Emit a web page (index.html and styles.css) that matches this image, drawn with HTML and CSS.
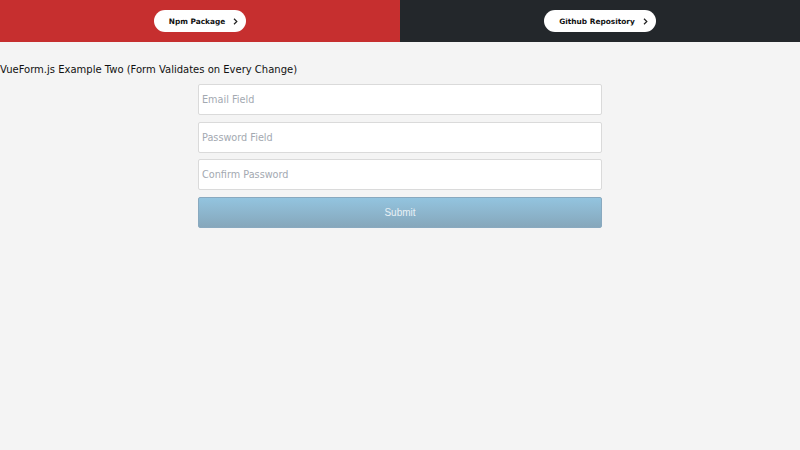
FILE: index.html
```html
<!DOCTYPE html>
<html>
<head>
<meta charset="utf-8">
<link rel="stylesheet" href="styles.css">
</head>
<body>
<header class="topbar">
  <div class="half half-red">
    <a class="pill" href="#">Npm Package<svg class="chev" width="5" height="7" viewBox="0 0 5 7"><path d="M1 0.8 L3.8 3.5 L1 6.2" fill="none" stroke="#222" stroke-width="1.2"/></svg></a>
  </div>
  <div class="half half-dark">
    <a class="pill" href="#">Github Repository<svg class="chev" width="5" height="7" viewBox="0 0 5 7"><path d="M1 0.8 L3.8 3.5 L1 6.2" fill="none" stroke="#222" stroke-width="1.2"/></svg></a>
  </div>
</header>
<main class="content">
  <h1 class="title">VueForm.js Example Two (Form Validates on Every Change)</h1>
  <form class="form">
    <input class="field" type="email" placeholder="Email Field">
    <input class="field" type="password" placeholder="Password Field">
    <input class="field" type="password" placeholder="Confirm Password">
    <button class="submit" type="button">Submit</button>
  </form>
</main>
</body>
</html>
```
FILE: styles.css
```css
* { box-sizing: border-box; }
html, body { margin: 0; padding: 0; }
body {
  background: #f4f4f4;
  font-family: "DejaVu Sans", sans-serif;
  width: 800px;
  height: 450px;
  overflow: hidden;
}
.topbar {
  display: flex;
  height: 42px;
}
.half {
  flex: 1;
  display: flex;
  align-items: center;
  justify-content: center;
}
.half-red { background: #c62f2f; }
.half-dark { background: #23272b; }
.pill {
  display: inline-flex;
  align-items: center;
  height: 22px;
  padding: 0 8px 0 15px;
  background: #fff;
  border-radius: 11px;
  color: #111;
  text-decoration: none;
  font-family: "DejaVu Sans", sans-serif;
  font-weight: 700;
  font-size: 7.4px;
}
.chev {
  margin-left: 8px;
  display: block;
}
.content {
  padding-top: 22px;
}
.title {
  margin: 0 0 8px 0;
  font-size: 10px;
  font-weight: normal;
  color: #111;
  line-height: 12px;
}
.form {
  width: 404px;
  margin: 0 auto;
  display: flex;
  flex-direction: column;
  gap: 6.5px;
}
.field {
  height: 31px;
  border: 1px solid #dadada;
  border-radius: 2px;
  background: #fff;
  padding: 0 3px;
  font-family: "DejaVu Sans", sans-serif;
  font-size: 9.7px;
  color: #333;
  outline: none;
}
.field::placeholder { color: #a3a9b1; }
.submit {
  height: 31px;
  border: 1px solid #89a9bf;
  border-radius: 2px;
  background: linear-gradient(#93c4df, #86a7bb);
  color: #e8f1f6;
  font-family: "Liberation Sans", Arial, sans-serif;
  font-size: 10px;
}
```
